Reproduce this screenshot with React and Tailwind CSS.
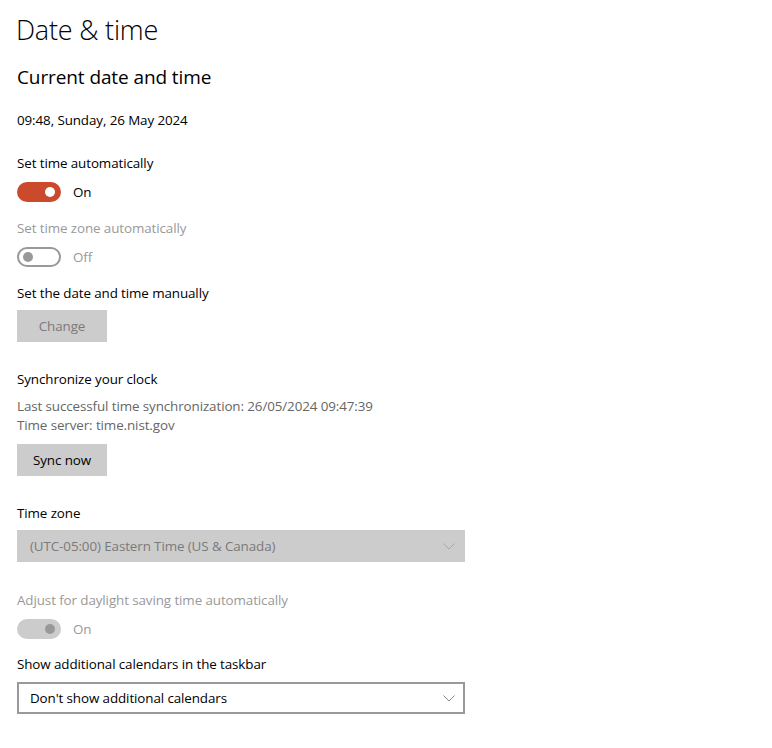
import React from "react";

const font = { fontFamily: '"Segoe UI", "Open Sans", "Noto Sans", sans-serif' };

function Chevron({ color }) {
  return (
    <svg width="12" height="7" viewBox="0 0 12 7" fill="none">
      <path d="M0.5 0.5 L6 6 L11.5 0.5" stroke={color} strokeWidth="1" />
    </svg>
  );
}

function Toggle({ state }) {
  if (state === "on") {
    return (
      <div className="w-[44px] h-[20px] rounded-full bg-[#cc4a2c] flex items-center justify-end pr-[6px]">
        <div className="w-[10px] h-[10px] rounded-full bg-white" />
      </div>
    );
  }
  if (state === "off") {
    return (
      <div className="w-[44px] h-[20px] rounded-full border-2 border-[#999999] flex items-center pl-[4px]">
        <div className="w-[10px] h-[10px] rounded-full bg-[#999999]" />
      </div>
    );
  }
  return (
    <div className="w-[44px] h-[20px] rounded-full bg-[#cccccc] flex items-center justify-end pr-[6px]">
      <div className="w-[10px] h-[10px] rounded-full bg-[#999999]" />
    </div>
  );
}

export default function App() {
  return (
    <div style={font} className="w-[772px] h-[748px] bg-white pl-[17px] pt-[10px] flex flex-col text-[13.4px] tracking-[-0.1px] text-black">
      <h1 className="text-[27px] leading-[40px] font-light -ml-[1px] tracking-[-0.2px]">Date &amp; time</h1>
      <h2 className="mt-[13px] text-[19px] leading-[28px] tracking-[-0.1px]">Current date and time</h2>
      <div className="mt-[19px] leading-[20px]">09:48, Sunday, 26 May 2024</div>

      <div className="mt-[23px] leading-[20px]">Set time automatically</div>
      <div className="mt-[9px] flex items-center gap-[12px]">
        <Toggle state="on" />
        <span className="leading-[20px]">On</span>
      </div>

      <div className="mt-[16px] leading-[20px] text-[#999999]">Set time zone automatically</div>
      <div className="mt-[9px] flex items-center gap-[12px]">
        <Toggle state="off" />
        <span className="leading-[20px] text-[#999999]">Off</span>
      </div>

      <div className="mt-[16px] leading-[20px]">Set the date and time manually</div>
      <div className="mt-[7px] w-[90px] h-[32px] bg-[#cccccc] flex items-center justify-center text-[#7a7a7a]">
        Change
      </div>

      <div className="mt-[27px] leading-[20px]">Synchronize your clock</div>
      <div className="mt-[8px] leading-[19px] text-[#666666]">
        Last successful time synchronization: 26/05/2024 09:47:39
      </div>
      <div className="leading-[19px] text-[#666666]">Time server: time.nist.gov</div>
      <div className="mt-[9px] w-[90px] h-[32px] bg-[#cccccc] flex items-center justify-center">
        Sync now
      </div>

      <div className="mt-[27px] leading-[20px]">Time zone</div>
      <div className="mt-[7px] w-[448px] h-[32px] bg-[#cccccc] flex items-center justify-between pl-[13px] pr-[10px] text-[#7a7a7a]">
        <span>(UTC-05:00) Eastern Time (US &amp; Canada)</span>
        <Chevron color="#a8a8a8" />
      </div>

      <div className="mt-[28px] leading-[20px] text-[#999999]">Adjust for daylight saving time automatically</div>
      <div className="mt-[9px] flex items-center gap-[12px]">
        <Toggle state="disabled" />
        <span className="leading-[20px] text-[#999999]">On</span>
      </div>

      <div className="mt-[15px] leading-[20px]">Show additional calendars in the taskbar</div>
      <div className="mt-[8px] w-[448px] h-[32px] border-2 border-[#999999] flex items-center justify-between pl-[11px] pr-[8px]">
        <span>Don't show additional calendars</span>
        <Chevron color="#888888" />
      </div>
    </div>
  );
}
